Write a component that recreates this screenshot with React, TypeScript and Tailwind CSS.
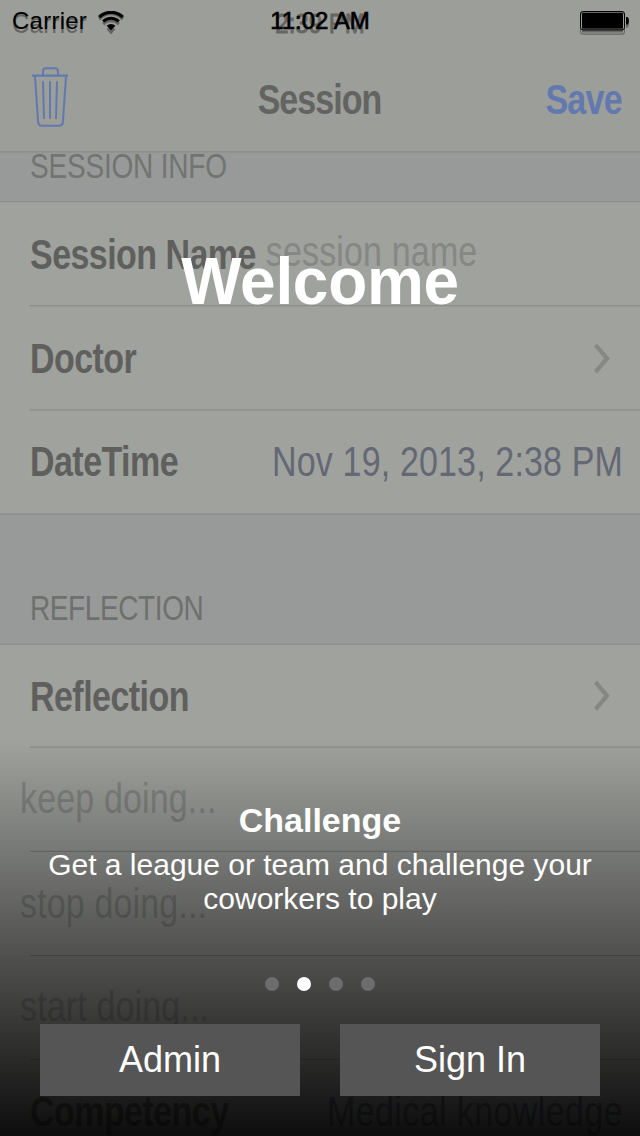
import React from "react";

const WifiIcon = () => (
  <svg width="26" height="20" viewBox="0 0 26 20" fill="none" stroke="currentColor">
    <path d="M1.2 6.100a17 17 0 0 1 23.600 0" strokeWidth="3.200" />
    <path d="M5.200 10.500a11.200 11.200 0 0 1 15.600 0" strokeWidth="3" />
    <path d="M13 19.200 8.600 14.700a6.300 6.300 0 0 1 8.800 0Z" fill="currentColor" stroke="none" />
  </svg>
);

const BatteryIcon = () => (
  <svg width="50" height="20" viewBox="0 0 50 20" fill="none">
    <rect x="0.500" y="0.500" width="44" height="18.400" rx="2.500" stroke="currentColor" />
    <rect x="2" y="2" width="41" height="15.400" rx="1" fill="currentColor" />
    <path d="M46 6h1.500q1.500 1 1.500 3.700T47.500 13.400H46Z" fill="currentColor" />
  </svg>
);

function StatusBar({ time, className }: { time: string; className: string }) {
  return (
    <div className={`grid h-10 grid-cols-3 items-center pl-3 pr-[10px] text-2xl leading-10 ${className}`}>
      <div className="flex items-center gap-[11px]">
        <span className="tracking-[0.25px]">Carrier</span>
        <WifiIcon />
      </div>
      <span className="-ml-[2px] text-center [-webkit-text-stroke:0.7px_currentColor]">{time}</span>
      <div className="flex justify-end">
        <BatteryIcon />
      </div>
    </div>
  );
}

const TrashIcon = () => (
  <svg width="38" height="52" viewBox="0 0 38 62" preserveAspectRatio="none" fill="none" stroke="#6279af" strokeWidth="2">
    <path d="M1 9.500h36" strokeWidth="2.200" />
    <path d="M12 9V5q0-3 3-3h9q3 0 3 3v4" />
    <path d="M4 10l3 45q.3 5 4 5h17q3.700 0 4-5l3-45" />
    <path d="M12 15l1 38M19 15v38M26 15l-1 38" />
  </svg>
);

const Chevron = () => (
  <svg width="18" height="26" viewBox="0 0 18 26" fill="none" stroke="#868885" strokeWidth="4">
    <path d="M2.500 1.500 14 13 2.500 24.500" />
  </svg>
);

function Row({ children, flush, last }: { children: React.ReactNode; flush?: boolean; last?: boolean }) {
  return (
    <div className={`shrink-0 bg-[#a0a29e] ${last ? "h-[87.4px]" : "h-[87.8px]"} ${flush ? "pl-5" : "pl-[30px]"}`}>
      <div className="flex h-full items-center justify-between pr-[17px]">{children}</div>
      {!last && <div className={`-mt-px h-px bg-[#858784] ${flush ? "ml-[10px]" : ""}`} />}
    </div>
  );
}

const Label = ({ children }: { children: string }) => (
  <span className="scale-y-[1.04] whitespace-nowrap font-bold tracking-[-0.55px] text-[#5f605d]">{children}</span>
);

const Placeholder = ({ children }: { children: string }) => (
  <span className="-mt-[3px] scale-y-[1.04] whitespace-nowrap tracking-[0.15px] text-[#858784]">{children}</span>
);

function SessionForm() {
  return (
    <div className="absolute inset-x-0 top-0 flex h-[960px] origin-top scale-y-[1.1833] flex-col overflow-hidden bg-[#a0a29e] text-[34px] leading-10">
      <header className="h-[129px] shrink-0 border-b-[1.500px] border-[#858786] bg-[#9c9e9a]">
        <StatusBar time="2:39 PM" className="text-[#656663]" />
        <div className="grid h-[88px] grid-cols-3 items-center pl-[31px] pr-[18px] font-bold tracking-[-0.7px]">
          <div className="-mt-[4px]"><TrashIcon /></div>
          <span className="-ml-[14px] scale-y-[1.04] text-center tracking-[-0.95px] text-[#636461]">Session</span>
          <span className="scale-y-[1.04] text-right text-[#6279af]">Save</span>
        </div>
      </header>
      <div className="h-[42px] shrink-0 border-b border-[#8a8c8b] bg-[#989a99] pl-[30px] text-[28px] leading-[23px] tracking-[-0.2px] text-[#727472]">
        <span className="inline-block scale-y-[1.04]">SESSION INFO</span>
      </div>
      <Row>
        <div className="flex gap-[10px]">
          <Label>Session Name</Label>
          <Placeholder>session name</Placeholder>
        </div>
      </Row>
      <Row>
        <Label>Doctor</Label>
        <div className="pr-3"><Chevron /></div>
      </Row>
      <Row last>
        <Label>DateTime</Label>
        <span className="scale-y-[1.04] tracking-[0.15px] text-[#636874]">Nov 19, 2013, 2:38 PM</span>
      </Row>
      <div className="h-[110.6px] shrink-0 border-y border-[#8a8c8b] bg-[#989a99] pl-[30px] pt-[60px] text-[28px] tracking-[-0.4px] text-[#6e706e]">
        <span className="inline-block scale-y-[1.04]">REFLECTION</span>
      </div>
      <Row>
        <Label>Reflection</Label>
        <div className="pr-3"><Chevron /></div>
      </Row>
      <Row flush><Placeholder>keep doing...</Placeholder></Row>
      <Row flush><Placeholder>stop doing...</Placeholder></Row>
      <Row flush><Placeholder>start doing...</Placeholder></Row>
      <Row last>
        <Label>Competency</Label>
        <span className="scale-y-[1.04] tracking-[0.4px] text-[#636874]">Medical knowledge</span>
      </Row>
    </div>
  );
}

export default function App() {
  return (
    <div className="relative h-[1136px] w-[640px] overflow-hidden bg-[#a0a29e] font-['Liberation_Sans',Arial,sans-serif]">
      <SessionForm />
      <div className="absolute inset-x-0 bottom-0 h-[396px] bg-linear-to-b from-black/0 to-black/92" />
      <main className="relative flex h-full flex-col pt-px text-white">
        <StatusBar time="11:02 AM" className="text-black" />
        <h1 className="mt-[204px] scale-y-[1.04] text-center text-[64px] font-bold leading-[72px] tracking-[-0.3px]">Welcome</h1>
        <section className="mt-[483px] text-center">
          <h2 className="text-[34px] font-bold leading-10">Challenge</h2>
          <p className="mx-auto mt-2 w-[580px] text-[30px] leading-[34px]">
            Get a league or team and challenge your coworkers to play
          </p>
        </section>
        <div className="mt-[61px] flex justify-center gap-[18px]">
          <i className="size-[14px] rounded-full bg-[#6d6d6d]" />
          <i className="size-[14px] rounded-full bg-white" />
          <i className="size-[14px] rounded-full bg-[#6d6d6d]" />
          <i className="size-[14px] rounded-full bg-[#6d6d6d]" />
        </div>
        <div className="mt-[33px] flex gap-10 px-10 text-4xl">
          <button className="h-[72px] flex-1 bg-[#555]">Admin</button>
          <button className="h-[72px] flex-1 bg-[#555]">Sign In</button>
        </div>
      </main>
    </div>
  );
}
